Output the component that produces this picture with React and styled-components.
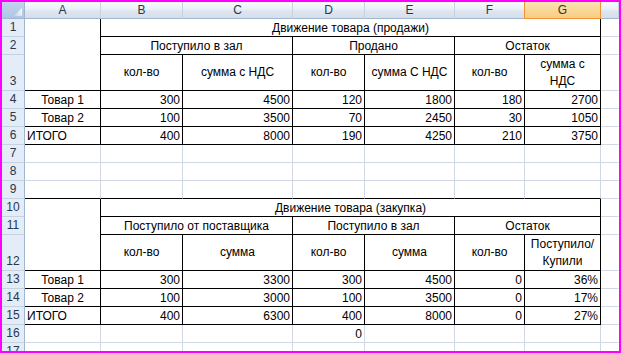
import React from 'react';
import styled, { createGlobalStyle, css } from 'styled-components';

const GRID = '#d0d7e5';
const INK = '#000000';
const HEAD_LINE = '#9eb6ce';

const lineColor = (v) => {
  if (v === 'ink') return INK;
  if (v === 'none') return 'transparent';
  return GRID;
};

const GlobalStyle = createGlobalStyle`
  html, body {
    margin: 0;
    padding: 0;
    background: #ffffff;
  }
  body {
    font-family: 'Liberation Sans', Arial, sans-serif;
  }
`;

const Frame = styled.div`
  width: 621px;
  height: 353px;
  box-sizing: border-box;
  border: 2px solid #ff00ff;
  overflow: hidden;
  background: #ffffff;
`;

const Sheet = styled.div`
  display: grid;
  grid-template-columns: 23px 76px 82px 110px 72px 90px 70px 76px 18px;
  grid-template-rows: 17px 18px 18px 36px repeat(8, 18px) 36px repeat(5, 18px);
  font-size: 12px;
  line-height: 15px;
  color: #000000;
`;

const Corner = styled.div`
  box-sizing: border-box;
  display: flex;
  align-items: flex-end;
  justify-content: flex-end;
  padding: 0 2px 2px 0;
  background: linear-gradient(#c3d4ec, #aec5e5);
  border-right: 1px solid ${HEAD_LINE};
  border-bottom: 1px solid ${HEAD_LINE};
`;

const ColHead = styled.div`
  box-sizing: border-box;
  display: flex;
  align-items: center;
  justify-content: center;
  color: #27384c;
  background: linear-gradient(#f8fafd 0%, #eaf0f7 45%, #dfe6f0 55%, #d6deea 100%);
  border-right: 1px solid #c5d2e2;
  border-bottom: 1px solid ${HEAD_LINE};

  ${({ $active }) => $active && css`
    margin-left: -1px;
    color: #2b3a2a;
    background: linear-gradient(#fbe3b5 0%, #f9d899 50%, #f7cd84 100%);
    border-left: 1px solid #f29436;
    border-right: 1px solid #f29436;
    border-bottom: 1px solid #f29436;
  `}
`;

const RowHead = styled.div`
  box-sizing: border-box;
  display: flex;
  align-items: flex-end;
  justify-content: center;
  padding-bottom: 1px;
  color: #27384c;
  background: #e4ecf7;
  border-right: 1px solid ${HEAD_LINE};
  border-bottom: 1px solid #c5d2e2;
`;

const Cell = styled.div`
  box-sizing: border-box;
  display: flex;
  align-items: ${({ $middle }) => ($middle ? 'center' : 'flex-end')};
  justify-content: ${({ $align }) => ({ left: 'flex-start', center: 'center', right: 'flex-end' }[$align] || 'flex-start')};
  grid-column: span ${({ $span }) => $span || 1};
  grid-row: span ${({ $rows }) => $rows || 1};
  padding: 0 2px;
  text-align: ${({ $align }) => $align || 'left'};
  white-space: pre-line;
  line-height: ${({ $middle }) => ($middle ? '17px' : '15px')};
  border-right: 1px solid ${({ $rline }) => lineColor($rline)};
  border-bottom: 1px solid ${({ $bline }) => lineColor($bline)};
`;

const sales = [
  ['Товар 1', 300, 4500, 120, 1800, 180, 2700],
  ['Товар 2', 100, 3500, 70, 2450, 30, 1050],
  ['ИТОГО', 400, 8000, 190, 4250, 210, 3750],
];

const purchase = [
  ['Товар 1', 300, 3300, 300, 4500, 0, '36%'],
  ['Товар 2', 100, 3000, 100, 3500, 0, '17%'],
  ['ИТОГО', 400, 6300, 400, 8000, 0, '27%'],
];

const blank = (bline) => Array.from({ length: 7 }, () => ({ bline }));

const dataRow = (r) => [
  { text: r[0], align: r[0] === 'ИТОГО' ? 'left' : 'center', ink: true },
  ...r.slice(1).map((v) => ({ text: String(v), align: 'right', ink: true })),
];

// one bordered block: title row, group row, column heads, three data rows
const block = (start, title, groups, heads, data) => [
  {
    n: start,
    cells: [
      { rows: 3, ink: true },
      { span: 6, text: title, align: 'center', ink: true },
    ],
  },
  {
    n: start + 1,
    cells: groups.map((g) => ({ span: 2, text: g, align: 'center', ink: true })),
  },
  {
    n: start + 2,
    cells: heads.map((h) => ({ text: h, align: 'center', middle: true, ink: true })),
  },
  ...data.map((r, i) => ({ n: start + 3 + i, cells: dataRow(r) })),
];

const rows = [
  ...block(
    1,
    'Движение товара (продажи)',
    ['Поступило в зал', 'Продано', 'Остаток'],
    ['кол-во', 'сумма с НДС', 'кол-во', 'сумма С НДС', 'кол-во', 'сумма с\nНДС'],
    sales,
  ),
  { n: 7, cells: blank() },
  { n: 8, cells: blank() },
  { n: 9, cells: blank('ink') },
  ...block(
    10,
    'Движение товара (закупка)',
    ['Поступило от поставщика', 'Поступило в зал', 'Остаток'],
    ['кол-во', 'сумма', 'кол-во', 'сумма', 'кол-во', 'Поступило/\nКупили'],
    purchase,
  ),
  {
    n: 16,
    cells: [{}, {}, {}, { text: '0', align: 'right' }, {}, {}, {}],
  },
  { n: 17, cells: blank('none'), last: true },
];

const columns = ['A', 'B', 'C', 'D', 'E', 'F', 'G', ''];

function CornerMark() {
  return (
    <svg width="8" height="8" viewBox="0 0 8 8">
      <defs>
        <linearGradient id="cornerFill" x1="0" y1="1" x2="1" y2="0">
          <stop offset="0" stopColor="#c9d3df" />
          <stop offset="1" stopColor="#ffffff" />
        </linearGradient>
      </defs>
      <path d="M8 0V8H0Z" fill="url(#cornerFill)" />
    </svg>
  );
}

export default function App() {
  return (
    <>
      <GlobalStyle />
      <Frame>
        <Sheet>
          <Corner>
            <CornerMark />
          </Corner>
          {columns.map((c, i) => (
            <ColHead key={`h${i}`} $active={c === 'G'}>{c}</ColHead>
          ))}
          {rows.map((row) => (
            <React.Fragment key={row.n}>
              <RowHead>{row.n}</RowHead>
              {row.cells.map((c, i) => (
                <Cell
                  key={i}
                  $span={c.span}
                  $rows={c.rows}
                  $align={c.align}
                  $middle={c.middle}
                  $rline={c.ink ? 'ink' : 'grid'}
                  $bline={c.ink ? 'ink' : c.bline}
                >
                  {c.text}
                </Cell>
              ))}
              <Cell $rline="none" $bline={row.last ? 'none' : 'grid'} />
            </React.Fragment>
          ))}
        </Sheet>
      </Frame>
    </>
  );
}
